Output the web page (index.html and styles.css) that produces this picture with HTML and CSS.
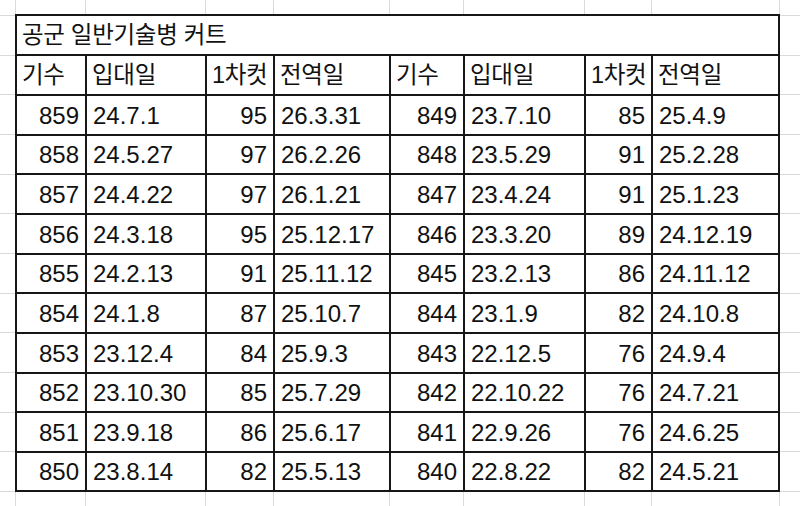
FILE: index.html
```html
<!DOCTYPE html>
<html lang="ko">
<head>
<meta charset="utf-8">
<title>공군 일반기술병 커트</title>
<link rel="stylesheet" href="styles.css">
</head>
<body>
<div class="sheet">
  <div class="cell title">공군 일반기술병 커트</div>

  <div class="cell head">기수</div><div class="cell head">입대일</div><div class="cell head">1차컷</div><div class="cell head">전역일</div>
  <div class="cell head">기수</div><div class="cell head">입대일</div><div class="cell head">1차컷</div><div class="cell head">전역일</div>

  <div class="cell num">859</div><div class="cell txt">24.7.1</div><div class="cell num">95</div><div class="cell txt">26.3.31</div>
  <div class="cell num">849</div><div class="cell txt">23.7.10</div><div class="cell num">85</div><div class="cell txt">25.4.9</div>

  <div class="cell num">858</div><div class="cell txt">24.5.27</div><div class="cell num">97</div><div class="cell txt">26.2.26</div>
  <div class="cell num">848</div><div class="cell txt">23.5.29</div><div class="cell num">91</div><div class="cell txt">25.2.28</div>

  <div class="cell num">857</div><div class="cell txt">24.4.22</div><div class="cell num">97</div><div class="cell txt">26.1.21</div>
  <div class="cell num">847</div><div class="cell txt">23.4.24</div><div class="cell num">91</div><div class="cell txt">25.1.23</div>

  <div class="cell num">856</div><div class="cell txt">24.3.18</div><div class="cell num">95</div><div class="cell txt">25.12.17</div>
  <div class="cell num">846</div><div class="cell txt">23.3.20</div><div class="cell num">89</div><div class="cell txt">24.12.19</div>

  <div class="cell num">855</div><div class="cell txt">24.2.13</div><div class="cell num">91</div><div class="cell txt">25.11.12</div>
  <div class="cell num">845</div><div class="cell txt">23.2.13</div><div class="cell num">86</div><div class="cell txt">24.11.12</div>

  <div class="cell num">854</div><div class="cell txt">24.1.8</div><div class="cell num">87</div><div class="cell txt">25.10.7</div>
  <div class="cell num">844</div><div class="cell txt">23.1.9</div><div class="cell num">82</div><div class="cell txt">24.10.8</div>

  <div class="cell num">853</div><div class="cell txt">23.12.4</div><div class="cell num">84</div><div class="cell txt">25.9.3</div>
  <div class="cell num">843</div><div class="cell txt">22.12.5</div><div class="cell num">76</div><div class="cell txt">24.9.4</div>

  <div class="cell num">852</div><div class="cell txt">23.10.30</div><div class="cell num">85</div><div class="cell txt">25.7.29</div>
  <div class="cell num">842</div><div class="cell txt">22.10.22</div><div class="cell num">76</div><div class="cell txt">24.7.21</div>

  <div class="cell num">851</div><div class="cell txt">23.9.18</div><div class="cell num">86</div><div class="cell txt">25.6.17</div>
  <div class="cell num">841</div><div class="cell txt">22.9.26</div><div class="cell num">76</div><div class="cell txt">24.6.25</div>

  <div class="cell num">850</div><div class="cell txt">23.8.14</div><div class="cell num">82</div><div class="cell txt">25.5.13</div>
  <div class="cell num">840</div><div class="cell txt">22.8.22</div><div class="cell num">82</div><div class="cell txt">24.5.21</div>
</div>
</body>
</html>
```

FILE: styles.css
```css
html, body {
  margin: 0;
  padding: 0;
}

body {
  width: 800px;
  height: 506px;
  overflow: hidden;
  background-color: #ffffff;
  background-image:
    linear-gradient(#dadada, #dadada),
    linear-gradient(#dadada, #dadada),
    linear-gradient(#dadada, #dadada),
    linear-gradient(#dadada, #dadada),
    linear-gradient(#dadada, #dadada),
    linear-gradient(#dadada, #dadada),
    linear-gradient(#dadada, #dadada),
    linear-gradient(#dadada, #dadada),
    linear-gradient(#dadada, #dadada),
    repeating-linear-gradient(to bottom, #dadada 0 1px, transparent 1px 39.667px);
  background-repeat: no-repeat;
  background-size:
    1px 100%, 1px 100%, 1px 100%, 1px 100%, 1px 100%,
    1px 100%, 1px 100%, 1px 100%, 1px 100%,
    100% 100%;
  background-position:
    15px 0, 85px 0, 205px 0, 273px 0, 389px 0,
    463px 0, 584px 0, 651px 0, 779px 0,
    0 15px;
  font-family: "Liberation Sans", "Noto Sans CJK KR", sans-serif;
  color: #111111;
}

.sheet {
  margin: 14px 0 0 15px;
  display: grid;
  width: max-content;
  grid-template-columns: 70px 120px 68px 116px 74px 121px 67px 127px;
  grid-template-rows: 40px 40px 40px 39px 40px 40px 39px 40px 40px 39px 40px 39px;
  border-left: 2px solid #161616;
  border-top: 2px solid #161616;
  background: #ffffff;
}

.cell {
  box-sizing: border-box;
  border-right: 2px solid #161616;
  border-bottom: 2px solid #161616;
  display: flex;
  align-items: center;
  font-size: 24px;
  line-height: 1;
  white-space: nowrap;
  overflow: hidden;
  padding-top: 1px;
}

.title {
  grid-column: 1 / -1;
  padding-left: 5px;
  font-size: 23.5px;
  letter-spacing: -0.3px;
}

.head {
  padding-left: 5px;
  font-size: 23.5px;
  letter-spacing: -0.3px;
}

.num {
  justify-content: flex-end;
  padding-right: 6px;
}

.txt {
  padding-left: 6px;
}
```
